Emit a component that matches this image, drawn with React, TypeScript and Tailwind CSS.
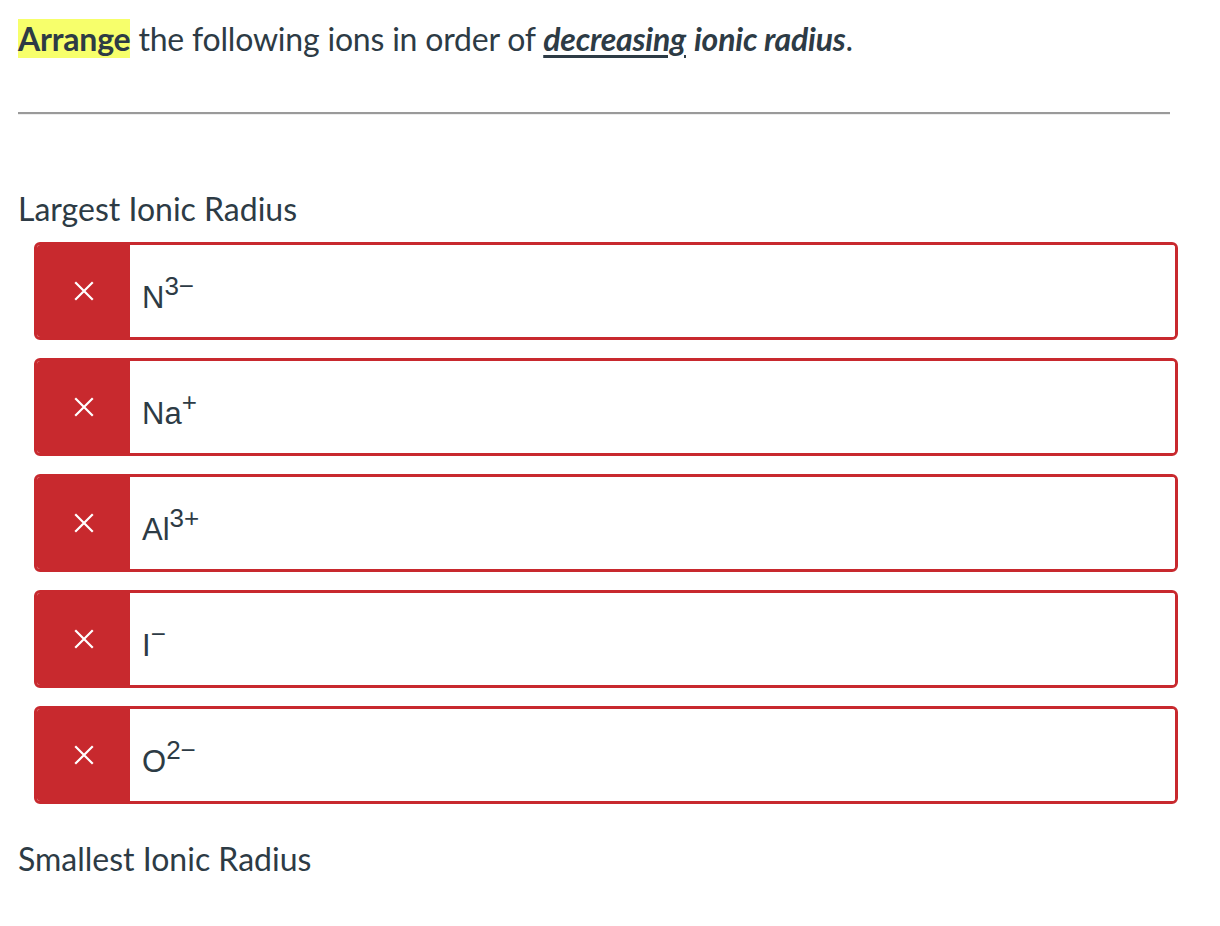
import React from "react";

const ions: { base: string; charge: string }[] = [
  { base: "N", charge: "3−" },
  { base: "Na", charge: "+" },
  { base: "Al", charge: "3+" },
  { base: "I", charge: "−" },
  { base: "O", charge: "2−" },
];

const XIcon = () => (
  <svg width="22" height="22" viewBox="0 0 22 22" fill="none">
    <path d="M3 3L19 19M19 3L3 19" stroke="white" strokeWidth="2.2" strokeLinecap="square" />
  </svg>
);

export default function App() {
  return (
    <div className="min-h-screen bg-white pl-[18px] pt-[20px] text-[#2d3b45] font-['Lato',sans-serif]">
      <p className="text-[32px] leading-[37px] tracking-[-0.2px]">
        <strong className="bg-[#f7ff6b] font-bold">Arrange</strong> the following ions in order of{" "}
        <strong className="italic font-bold underline decoration-[3px] underline-offset-[4px]">decreasing</strong>{" "}
        <strong className="italic font-bold">ionic radius</strong>.
      </p>

      <div className="mt-[55px] w-[1152px] h-[3px] border-t-2 border-[#9a9a9a] border-b border-b-[#eeeeee]" />

      <div className="mt-[75px] text-[32px] leading-[38px]">Largest Ionic Radius</div>

      <div className="mt-[14px] ml-4 flex w-[1144px] flex-col gap-[18px]">
        {ions.map((ion) => (
          <div
            key={ion.base}
            className="flex h-[98px] overflow-hidden rounded-[6px] border-[3px] border-[#c8292e]"
          >
            <div className="flex w-[93px] items-center justify-center bg-[#c8292e]">
              <XIcon />
            </div>
            <div className="flex flex-1 items-center pl-[12px] bg-white font-['Liberation_Sans',Arial,sans-serif] text-[31px] leading-none text-[#2d3b45]">
              <span className="mt-[12px]">
                {ion.base}
                <span className="relative -top-[13px] text-[26px]">{ion.charge}</span>
              </span>
            </div>
          </div>
        ))}
      </div>

      <div className="mt-[36px] text-[32px] leading-[38px]">Smallest Ionic Radius</div>
    </div>
  );
}
